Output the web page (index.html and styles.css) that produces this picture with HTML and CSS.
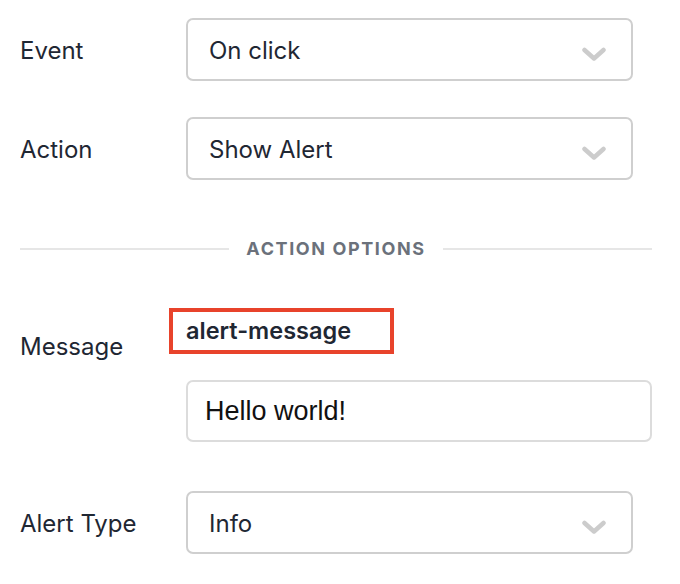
FILE: index.html
```html
<!DOCTYPE html>
<html lang="en">

<head>
  <meta charset="UTF-8">
  <meta name="viewport" content="width=device-width, initial-scale=1.0">
  <title>Action Options</title>
  <link rel="stylesheet" href="styles.css">
</head>

<body>

  <div class="panel">

    <div class="field">
      <label class="field-label">Event</label>
      <div class="select">
        <span>On click</span>
        <svg class="chevron" width="24" height="24" viewBox="0 0 24 24">
          <polyline points="2.5,11 12,19.5 21.5,11" />
        </svg>
      </div>
    </div>

    <div class="field">
      <label class="field-label">Action</label>
      <div class="select">
        <span>Show Alert</span>
        <svg class="chevron" width="24" height="24" viewBox="0 0 24 24">
          <polyline points="2.5,11 12,19.5 21.5,11" />
        </svg>
      </div>
    </div>

    <div class="divider">
      <span>ACTION OPTIONS</span>
    </div>

    <div class="field field-stacked">
      <label class="field-label">Message</label>
      <div class="field-body">
        <div class="param-name">alert-message</div>
        <input type="text" class="text-input" value="Hello world!">
      </div>
    </div>

    <div class="field">
      <label class="field-label">Alert Type</label>
      <div class="select">
        <span>Info</span>
        <svg class="chevron" width="24" height="24" viewBox="0 0 24 24">
          <polyline points="2.5,11 12,19.5 21.5,11" />
        </svg>
      </div>
    </div>

  </div>

</body>

</html>
```

FILE: styles.css
```css
body {
  margin: 0;
  background: #ffffff;
  font-family: Inter, "Noto Sans", sans-serif;
  color: #1f2733;
}

.panel {
  width: 632px;
  padding: 18px 20px 0;
}

.field {
  display: flex;
  align-items: center;
  margin-bottom: 36px;
}

.field-label {
  width: 166px;
  flex-shrink: 0;
  padding-top: 2px;
  font-size: 24px;
  line-height: 28px;
}

.select {
  width: 447px;
  height: 63px;
  box-sizing: border-box;
  display: flex;
  align-items: center;
  justify-content: space-between;
  padding: 2px 25px 0 21px;
  border: 2px solid #cfcfcf;
  border-radius: 7px;
  font-size: 24px;
}

.chevron polyline {
  fill: none;
  stroke: #cccccc;
  stroke-width: 4.5;
  stroke-linecap: round;
  stroke-linejoin: round;
}

.divider {
  display: flex;
  align-items: center;
  gap: 17px;
  margin: 58px 0 48px;
  font-size: 18px;
  line-height: 22px;
  font-weight: 700;
  letter-spacing: 1.6px;
  color: #6b717b;
}

.divider::before,
.divider::after {
  content: "";
  flex: 1;
  height: 2px;
  background: #e6e6e6;
}

.field-stacked {
  align-items: flex-start;
  margin-bottom: 49px;
}

.field-stacked .field-label {
  margin-top: 23px;
}

.field-body {
  display: flex;
  flex-direction: column;
  align-items: flex-start;
}

.param-name {
  margin-left: -17px;
  padding: 5px 39px 5px 13px;
  border: 4px solid #e8432b;
  font-size: 23.5px;
  line-height: 28px;
  font-weight: 600;
}

.text-input {
  width: 466px;
  height: 62px;
  box-sizing: border-box;
  margin-top: 26px;
  padding: 0 17px;
  border: 2px solid #dcdcdc;
  border-radius: 7px;
  font-family: "Liberation Sans", Arial, sans-serif;
  font-size: 27px;
  color: #111111;
}
```
